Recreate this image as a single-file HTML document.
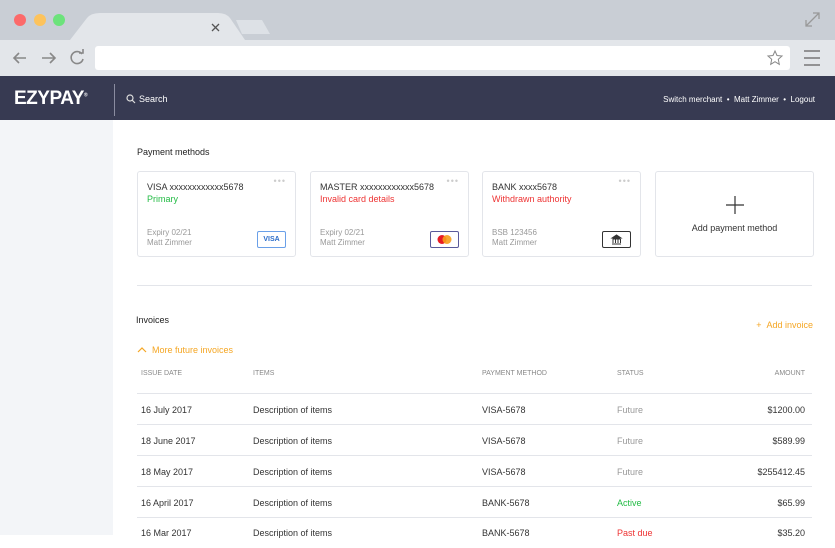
<!DOCTYPE html><html><head><style>
*{margin:0;padding:0;box-sizing:border-box}
body{width:835px;height:535px;overflow:hidden;font-family:"Liberation Sans",sans-serif;background:#fff;position:relative}
.a{position:absolute}
.card{position:absolute;top:171px;width:159px;height:86px;border:1px solid #e3e5ea;border-radius:3px;font-size:9px;color:#333}
.card .t{position:absolute;left:9px;top:10px}
.card .s{position:absolute;left:9px;top:22px}
.card .e{position:absolute;left:9px;top:56px;color:#999;font-size:8px;line-height:10px}
.card .d{position:absolute;right:9px;top:4px;color:#ccc;font-size:9px;letter-spacing:1px}
.card .b{position:absolute;right:9px;top:59px;width:29px;height:17px;border:1px solid #999;border-radius:2px}
.row{position:absolute;left:137px;width:675px;height:31px;border-top:1px solid #e3e5ea;font-size:9px;color:#333}
.row span{position:absolute;top:11px}
</style></head><body>
<div class="a" style="left:0;top:0;width:835px;height:40px;background:#c9ced5"></div>
<svg class="a" style="left:0;top:0" width="835" height="76">
<path d="M70 40 L87 18 Q91 13 100 13 H218 Q226 13 230 18 L245 40 Z" fill="#e3e6ea"/>
<path d="M236 20 H262 L270 34 H242 Z" fill="#dde1e6"/>
<rect x="0" y="40" width="835" height="36" fill="#e3e6ea"/>
<circle cx="20" cy="20" r="6" fill="#fc6a6a"/><circle cx="40" cy="20" r="6" fill="#fdc35c"/><circle cx="59" cy="20" r="6" fill="#6ce37b"/>
<path d="M212 24l7 7M219 24l-7 7" stroke="#555" stroke-width="1.3"/>
<rect x="95" y="46" width="695" height="24" rx="3" fill="#fff"/>
<g stroke="#888" stroke-width="1.6" fill="none"><path d="M26 58H14M19 53l-5 5 5 5"/><path d="M42 58H55M50 53l5 5-5 5"/><path d="M82 54a6 6 0 1 0 1 5"/><path d="M79 53h4v-4"/></g>
<path d="M775 51l2 4.5 5 .5-3.7 3.3 1 5-4.3-2.6-4.3 2.6 1-5-3.7-3.3 5-.5z" fill="none" stroke="#888"/>
<g stroke="#777" stroke-width="1.6"><path d="M804 51h16M804 58h16M804 65h16"/></g>
<g stroke="#999" stroke-width="1.3" fill="none"><path d="M806 26l13-13M813 13h6v6M806 20v6h6"/></g>
</svg>
<div class="a" style="left:0;top:76px;width:835px;height:44px;background:#373a52"></div>
<div class="a" style="left:14px;top:88px;color:#fff;font-weight:bold;font-size:19px;letter-spacing:-0.5px">EZYPAY<sup style="font-size:5px">®</sup></div>
<div class="a" style="left:114px;top:84px;width:1px;height:32px;background:#8a8ca0"></div>
<svg class="a" style="left:126px;top:94px" width="10" height="10"><circle cx="4" cy="4" r="3" stroke="#ddd" fill="none" stroke-width="1.2"/><path d="M6.2 6.2L9 9" stroke="#ddd" stroke-width="1.2"/></svg>
<div class="a" style="left:139px;top:94px;color:#fff;font-size:9px">Search</div>
<div class="a" style="right:20px;top:95px;color:#fff;font-size:8px">Switch merchant &nbsp;•&nbsp; Matt Zimmer &nbsp;•&nbsp; Logout</div>
<div class="a" style="left:0;top:120px;width:113px;height:415px;background:#f3f5f8"></div>
<div class="a" style="left:137px;top:147px;font-size:9px;color:#222">Payment methods</div>
<div class="card" style="left:137px"><div class="t">VISA xxxxxxxxxxxx5678</div><div class="s" style="color:#22bb44">Primary</div><div class="d">•••</div><div class="e">Expiry 02/21<br>Matt Zimmer</div><div class="b" style="border-color:#6aa0e8;color:#2a6cc9;font-size:7px;font-weight:bold;text-align:center;line-height:15px">VISA</div></div>
<div class="card" style="left:310px"><div class="t">MASTER xxxxxxxxxxxx5678</div><div class="s" style="color:#ee3333">Invalid card details</div><div class="d">•••</div><div class="e">Expiry 02/21<br>Matt Zimmer</div><div class="b" style="border-color:#5a5a9a"><svg width="27" height="15"><circle cx="11" cy="7.5" r="4.5" fill="#e81c24"/><circle cx="16" cy="7.5" r="4.5" fill="#f79e1b" opacity=".9"/></svg></div></div>
<div class="card" style="left:482px"><div class="t">BANK xxxx5678</div><div class="s" style="color:#ee3333">Withdrawn authority</div><div class="d">•••</div><div class="e">BSB 123456<br>Matt Zimmer</div><div class="b" style="border-color:#333"><svg width="27" height="15"><path d="M9 6l4.5-3 4.5 3zM9.5 7h8M10 7v4M12.5 7v4M15 7v4M17.5 7v4M9 12h9" stroke="#333" fill="#333"/></svg></div></div>
<div class="card" style="left:655px;width:159px"><svg class="a" style="left:70px;top:24px" width="18" height="18"><path d="M9 0v18M0 9h18" stroke="#333" stroke-width="1.2"/></svg><div class="a" style="left:0;width:100%;text-align:center;top:51px">Add payment method</div></div>
<div class="a" style="left:137px;top:285px;width:675px;height:1px;background:#e3e5ea"></div>
<div class="a" style="left:136px;top:315px;font-size:9px;color:#222">Invoices</div>
<div class="a" style="right:22px;top:320px;font-size:9px;color:#f5a623">+ &nbsp;Add invoice</div>
<div class="a" style="left:137px;top:345px;font-size:9px;color:#f5a623"><svg width="10" height="7"><path d="M1 6l4-4 4 4" stroke="#f5a623" fill="none" stroke-width="1.2"/></svg> &nbsp;More future invoices</div>
<div class="a" style="left:141px;top:370px;font-size:7px;color:#888;width:664px">
<span class="a" style="left:0">ISSUE DATE</span><span class="a" style="left:112px">ITEMS</span><span class="a" style="left:341px">PAYMENT METHOD</span><span class="a" style="left:476px">STATUS</span><span class="a" style="right:0">AMOUNT</span></div>
<div class="row" style="top:393px"><span style="left:4px">16 July 2017</span><span style="left:116px">Description of items</span><span style="left:345px">VISA-5678</span><span style="left:480px;color:#999">Future</span><span style="right:7px">$1200.00</span></div>
<div class="row" style="top:424px"><span style="left:4px">18 June 2017</span><span style="left:116px">Description of items</span><span style="left:345px">VISA-5678</span><span style="left:480px;color:#999">Future</span><span style="right:7px">$589.99</span></div>
<div class="row" style="top:455px"><span style="left:4px">18 May 2017</span><span style="left:116px">Description of items</span><span style="left:345px">VISA-5678</span><span style="left:480px;color:#999">Future</span><span style="right:7px">$255412.45</span></div>
<div class="row" style="top:486px"><span style="left:4px">16 April 2017</span><span style="left:116px">Description of items</span><span style="left:345px">BANK-5678</span><span style="left:480px;color:#22bb44">Active</span><span style="right:7px">$65.99</span></div>
<div class="row" style="top:517px"><span style="left:4px;top:10px">16 Mar 2017</span><span style="left:116px;top:10px">Description of items</span><span style="left:345px;top:10px">BANK-5678</span><span style="left:480px;top:10px;color:#ee3333">Past due</span><span style="right:7px;top:10px">$35.20</span></div>
</body></html>
